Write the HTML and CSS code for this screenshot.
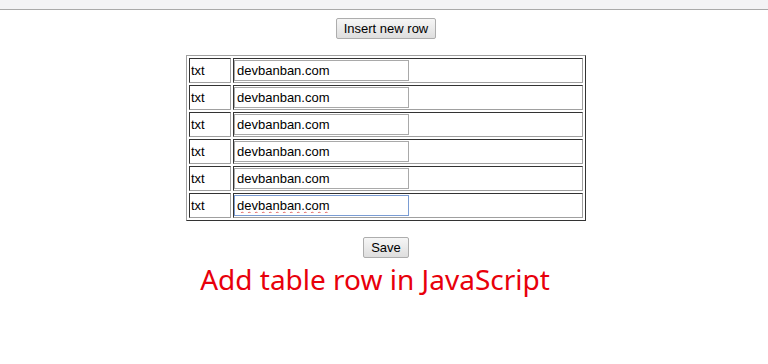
FILE: index.html
```html
<!DOCTYPE html>
<html lang="en">
<head>
  <meta charset="UTF-8">
  <title>Add table row in JavaScript</title>
  <link rel="stylesheet" href="styles.css">
</head>
<body>
<div class="topbar"></div>
<div class="page">
  <button class="btn" type="button">Insert new row</button>

  <table class="rows" border="1" cellspacing="2" cellpadding="1">
    <tr><td class="rows__label">txt</td><td><input class="rows__input" type="text" value="devbanban.com"></td></tr>
    <tr><td class="rows__label">txt</td><td><input class="rows__input" type="text" value="devbanban.com"></td></tr>
    <tr><td class="rows__label">txt</td><td><input class="rows__input" type="text" value="devbanban.com"></td></tr>
    <tr><td class="rows__label">txt</td><td><input class="rows__input" type="text" value="devbanban.com"></td></tr>
    <tr><td class="rows__label">txt</td><td><input class="rows__input" type="text" value="devbanban.com"></td></tr>
    <tr><td class="rows__label">txt</td><td><input class="rows__input rows__input--focus" type="text" value="devbanban.com"></td></tr>
  </table>

  <button class="btn" type="button">Save</button>

  <h1 class="caption">Add table row in JavaScript</h1>
</div>
</body>
</html>
```

FILE: styles.css
```css
* {
  box-sizing: border-box;
}

body {
  margin: 0;
  background: #fff;
  font-family: "Liberation Sans", Arial, sans-serif;
  font-size: 13px;
  color: #000;
}

.topbar {
  height: 10px;
  background: #f3f3f5;
  border-bottom: 1px solid #a9a9a9;
}

.page {
  display: flex;
  flex-direction: column;
  align-items: center;
  padding-top: 8px;
  padding-left: 4px;
}

.btn {
  font-family: "Liberation Sans", Arial, sans-serif;
  font-size: 13px;
  height: 21px;
  padding: 0 7px;
  border: 1px solid #adadad;
  border-radius: 2px;
  background: linear-gradient(#f6f6f6, #dedede);
  color: #000;
}

.rows {
  width: 400px;
  margin: 16px 0;
  border: 1px solid;
  border-color: #a0a0a0 #333 #333 #a0a0a0;
  border-collapse: separate;
}

.rows td {
  border: 1px solid;
  border-color: #333 #a0a0a0 #a0a0a0 #333;
  height: 25px;
  padding: 1px;
}

.rows__label {
  width: 42px;
}

.rows__input {
  display: block;
  width: 175px;
  height: 21px;
  margin-left: -1px;
  padding: 0 2px;
  border: 1px solid #a9a9a9;
  font-family: "Liberation Sans", Arial, sans-serif;
  font-size: 13px;
  color: #000;
  outline: none;
}

.rows__input--focus {
  border-color: #7a9cd3;
  text-decoration: underline wavy #e06060;
  text-decoration-thickness: 1px;
}

.caption {
  margin: 2px 22px 0 0;
  font-family: "Noto Sans", sans-serif;
  font-weight: normal;
  font-size: 28px;
  color: #e8000b;
}
```
